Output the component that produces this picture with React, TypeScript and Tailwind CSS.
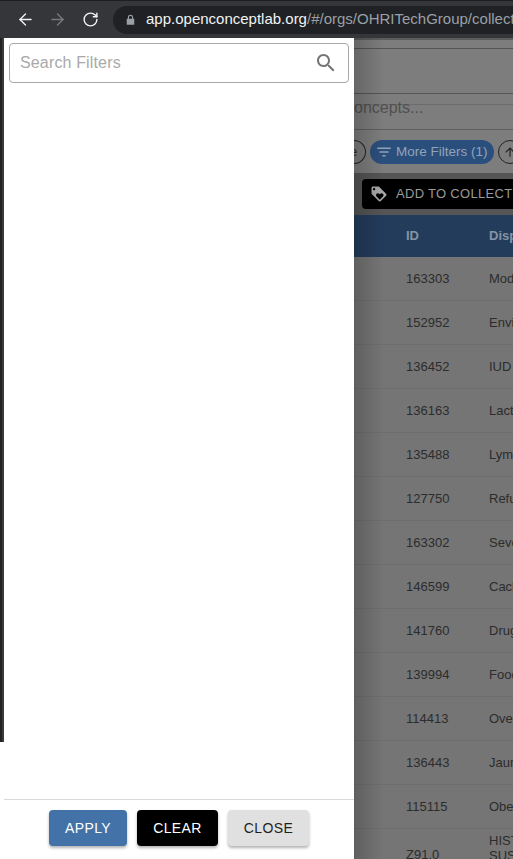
import { ArrowLeft, ArrowRight, RotateCw } from "lucide-react";

const rows = [
  { id: "163303", name: "Mod" },
  { id: "152952", name: "Envi" },
  { id: "136452", name: "IUD" },
  { id: "136163", name: "Lact" },
  { id: "135488", name: "Lym" },
  { id: "127750", name: "Refu" },
  { id: "163302", name: "Seve" },
  { id: "146599", name: "Cach" },
  { id: "141760", name: "Drug" },
  { id: "139994", name: "Food" },
  { id: "114413", name: "Ove" },
  { id: "136443", name: "Jaun" },
  { id: "115115", name: "Obe" },
];

function MuiIcon({ d, className }: { d: string; className: string }) {
  return (
    <svg viewBox="0 0 24 24" className={className} fill="currentColor">
      <path d={d} />
    </svg>
  );
}

function BrowserBar() {
  return (
    <div className="h-[38px] shrink-0 bg-[#35363a] border-t border-[#1d1e20] flex items-center pl-[16px]">
      <ArrowLeft className="w-[19px] h-[19px] shrink-0 text-[#f1f3f4]" strokeWidth={1.7} />
      <ArrowRight className="w-[19px] h-[19px] shrink-0 text-[#797a7d] ml-[13px]" strokeWidth={1.7} />
      <RotateCw className="w-[17px] h-[17px] shrink-0 text-[#f1f3f4] ml-[15px]" strokeWidth={2} />
      <div className="ml-[14px] flex-1 h-[28px] bg-[#202124] rounded-l-full flex items-center pl-[13px] overflow-hidden whitespace-nowrap text-[15px]">
        <svg viewBox="0 0 12 14" className="w-[9px] h-[11px] shrink-0" fill="#9aa0a6">
          <path d="M2.5 6V4a3.5 3.5 0 0 1 7 0v2H11v8H1V6zm1.5 0h4V4a2 2 0 0 0-4 0z" />
        </svg>
        <span className="ml-[11px] text-[#f1f3f4]">app.openconceptlab.org</span>
        <span className="text-[#9aa0a6]">/#/orgs/OHRITechGroup/collections</span>
      </div>
    </div>
  );
}

function Drawer() {
  return (
    <div className="w-[354px] shrink-0 bg-white flex flex-col relative z-10">
      <div className="absolute left-0 top-0 w-[4px] h-[704px] bg-[#3a3a3c] border-l-2 border-[#222]" />
      <div className="pl-[9px] pr-[5px] pt-[5px] flex-1">
        <div className="h-[40px] border border-[#a8a8a8] rounded-[4px] flex items-center justify-between pl-[10px] pr-[10px]">
          <span className="text-[16px] tracking-[0.15px] text-[#a9a9a9]">Search Filters</span>
          <MuiIcon
            className="w-[24px] h-[24px] text-[#757575]"
            d="M15.5 14h-.79l-.28-.27C15.41 12.59 16 11.11 16 9.5 16 5.91 13.09 3 9.5 3S3 5.91 3 9.5 5.91 16 9.5 16c1.61 0 3.09-.59 4.23-1.57l.27.28v.79l5 4.99L20.49 19l-4.99-5zm-6 0C7.01 14 5 11.99 5 9.5S7.01 5 9.5 5 14 7.01 14 9.5 11.99 14 9.5 14z"
          />
        </div>
      </div>
      <div className="ml-[4px] h-[60px] border-t border-[#d9d9d9] flex pt-[10px] pl-[45px] gap-[10px] text-[14px] tracking-[0.4px]">
        <button className="w-[78px] h-[36px] rounded-[4px] bg-[#4372a8] text-white shadow-[0_2px_3px_rgba(0,0,0,0.3)]">
          APPLY
        </button>
        <button className="w-[81px] h-[36px] rounded-[4px] bg-black text-white shadow-[0_2px_3px_rgba(0,0,0,0.3)]">
          CLEAR
        </button>
        <button className="w-[81px] h-[36px] rounded-[4px] bg-[#e0e0e0] text-[#1f1f1f] shadow-[0_2px_3px_rgba(0,0,0,0.3)]">
          CLOSE
        </button>
      </div>
    </div>
  );
}

function Backdrop() {
  return (
    <div className="flex-1 relative overflow-hidden bg-[#757575] text-[#2c2c2c] text-[13px] whitespace-nowrap">
      <div className="h-[135px] bg-[#7d7d7d] flex flex-col">
        <div className="h-[11px] border-t-2 border-t-[#5c5c5c] border-b border-b-[#555]" />
        <div className="h-[45px] border-b border-[#555]" />
        <div className="h-[11px] border-b border-[#6c6c6c]" />
        <div className="h-[25px] border-b border-[#5f5f5f] text-[16px] text-[#505050] leading-[5px]">
          oncepts...
        </div>
        <div className="flex items-start h-[43px] pt-[10px] text-[13.5px]">
          <div className="w-[12px] h-[24px] shrink-0 border border-l-0 border-[#222] rounded-r-full overflow-hidden text-[13px] leading-[22px]">
            <span className="block -ml-[4px]">e</span>
          </div>
          <div className="ml-[4px] w-[124px] h-[24px] shrink-0 rounded-full bg-[#2b4f7c] flex items-center pl-[5px] text-[#92a3b9]">
            <MuiIcon className="w-[18px] h-[18px] shrink-0" d="M10 18h4v-2h-4v2zM3 6v2h18V6H3zm3 7h12v-2H6v2z" />
            <span className="ml-[3px]">More Filters (1)</span>
          </div>
          <div className="ml-[4px] w-[24px] h-[24px] shrink-0 rounded-full border border-[#222] flex items-center justify-center">
            <MuiIcon className="w-[14px] h-[14px] text-[#222]" d="M4 12l1.41 1.41L11 7.83V20h2V7.83l5.58 5.59L20 12l-8-8-8 8z" />
          </div>
        </div>
      </div>
      <div className="h-[42px] bg-[#555] pl-[8px] pt-[6px]">
        <div className="w-[200px] h-[30px] bg-black rounded-[4px] flex items-center pl-[8px] text-[13px] text-[#9a9a9a] tracking-[0.3px]">
          <MuiIcon
            className="w-[18px] h-[18px] shrink-0 text-[#a8a8a8]"
            d="M21.41 11.58l-9-9C12.05 2.22 11.55 2 11 2H4c-1.1 0-2 .9-2 2v7c0 .55.22 1.05.59 1.42l9 9c.36.36.86.58 1.41.58s1.05-.22 1.41-.59l7-7c.37-.36.59-.86.59-1.41s-.23-1.06-.59-1.42zM5.5 7C4.67 7 4 6.33 4 5.5S4.67 4 5.5 4 7 4.67 7 5.5 6.33 7 5.5 7zm11.77 8.27L13 19.54l-4.27-4.27C8.28 14.81 8 14.19 8 13.5c0-1.38 1.12-2.5 2.5-2.5.69 0 1.32.28 1.77.74l.73.72.73-.73c.45-.45 1.08-.73 1.77-.73 1.38 0 2.5 1.12 2.5 2.5 0 .69-.28 1.32-.73 1.77z"
          />
          <span className="ml-[8px]">ADD TO COLLECTION</span>
        </div>
      </div>
      <div className="h-[42px] bg-[#233c5c] flex items-center font-bold text-[#8593a5]">
        <span className="ml-[52px] w-[83px] shrink-0">ID</span>
        <span>Display</span>
      </div>
      {rows.map((row) => (
        <div key={row.id} className="h-[44px] flex items-center border-b border-[#6e6e6e]">
          <span className="ml-[52px] w-[83px] shrink-0">{row.id}</span>
          <span>{row.name}</span>
        </div>
      ))}
      <div className="h-[44px] flex items-start">
        <span className="ml-[52px] w-[83px] shrink-0 pt-[16px]">Z91.0</span>
        <span className="pt-[4px] leading-[15px]">
          HIST
          <br />
          SUS
        </span>
      </div>
      <div className="absolute left-0 top-0 bottom-0 w-[30px] bg-gradient-to-r from-[#00000030] to-transparent" />
    </div>
  );
}

export default function App() {
  return (
    <div className="w-[513px] h-[859px] overflow-hidden flex flex-col font-['Liberation_Sans',Arial,sans-serif]">
      <BrowserBar />
      <div className="flex flex-1 min-h-0">
        <Drawer />
        <Backdrop />
      </div>
    </div>
  );
}
